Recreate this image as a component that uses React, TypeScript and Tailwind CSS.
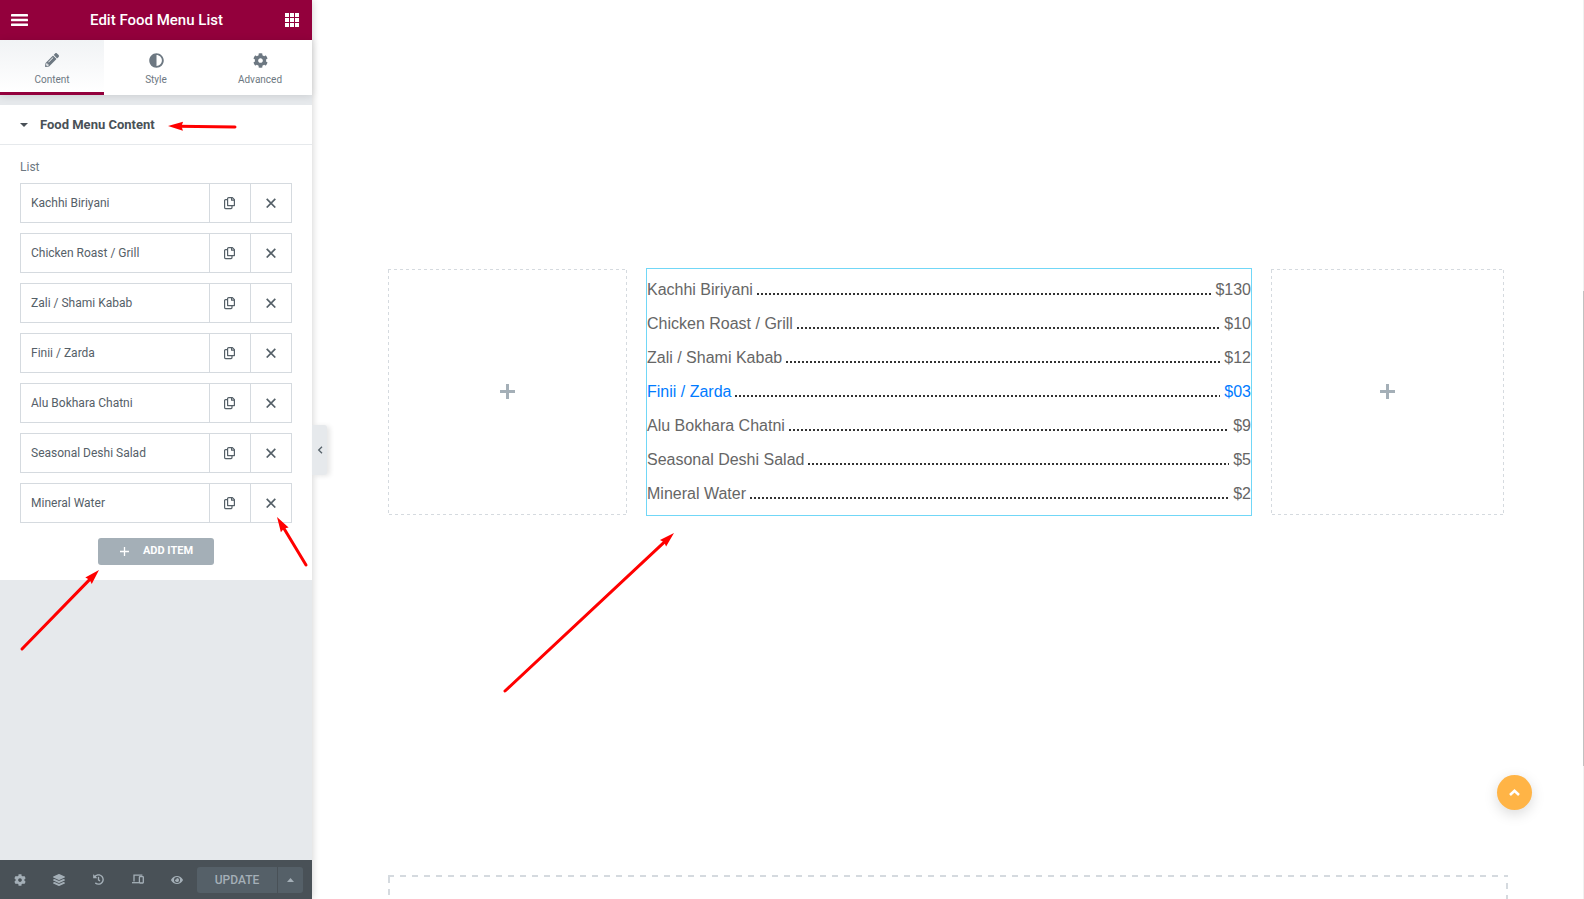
import { useState } from 'react';
import { FaAdjust, FaCog, FaEye, FaHistory, FaLayerGroup, FaPencilAlt } from 'react-icons/fa';

const menuItems = [
  { id: 1, name: 'Kachhi Biriyani', price: '$130' },
  { id: 2, name: 'Chicken Roast / Grill', price: '$10' },
  { id: 3, name: 'Zali / Shami Kabab', price: '$12' },
  { id: 4, name: 'Finii / Zarda', price: '$03', active: true },
  { id: 5, name: 'Alu Bokhara Chatni', price: '$9' },
  { id: 6, name: 'Seasonal Deshi Salad', price: '$5' },
  { id: 7, name: 'Mineral Water', price: '$2' }
];

const tabs = [
  { name: 'Content', icon: <PencilIcon /> },
  { name: 'Style', icon: <FaAdjust size={15} /> },
  { name: 'Advanced', icon: <FaCog size={15} /> }
];

// tail -> tip
const arrows = [
  { x1: 235, y1: 127, x2: 168, y2: 126 },
  { x1: 22, y1: 649, x2: 99, y2: 570 },
  { x1: 306, y1: 565, x2: 277, y2: 517 },
  { x1: 505, y1: 691, x2: 674, y2: 533 }
];

function PencilIcon() {
  return <FaPencilAlt size={14} />;
}

function MenuIcon() {
  return (
    <svg width="17" height="12" viewBox="0 0 17 12" fill="currentColor">
      {[0, 4.8, 9.6].map((y) => <rect key={y} y={y} width="17" height="2.4" rx=".4" />)}
    </svg>
  );
}

function GridIcon() {
  return (
    <svg width="14" height="14" viewBox="0 0 14 14" fill="currentColor">
      {[0, 5, 10].map((y) => [0, 5, 10].map((x) => <rect key={`${x}-${y}`} x={x} y={y} width="4" height="4" />))}
    </svg>
  );
}

function CopyIcon() {
  return (
    <svg width="12" height="14" viewBox="0 0 12 14" fill="none" stroke="currentColor" strokeWidth="1.2" strokeLinejoin="round">
      <path d="M4.600 1.600h3.800l2 2v6H3.600v-7a1 1 0 0 1 1-1z" />
      <path d="M7.600 1.600v2.600h2.800" />
      <path d="M3.600 3.600H1.600a1 1 0 0 0-1 1v7a1 1 0 0 0 1 1h5.400a1 1 0 0 0 1-1V9.600" />
    </svg>
  );
}

function CloseIcon() {
  return (
    <svg width="10" height="10" viewBox="0 0 10 10" fill="none" stroke="currentColor" strokeWidth="1.7">
      <path d="M.7.9l8.600 8.600M9.300.9L.7 9.500" />
    </svg>
  );
}

function PlusIcon({ size, stroke }: { size: number; stroke: number }) {
  return (
    <svg width={size} height={size} viewBox={`0 0 ${size} ${size}`} fill="none" stroke="currentColor" strokeWidth={stroke}>
      <path d={`M${size / 2} 0v${size}M0 ${size / 2}h${size}`} />
    </svg>
  );
}

function ResponsiveIcon() {
  return (
    <svg width="12" height="10" viewBox="0 0 12 10" fill="none" stroke="currentColor" strokeWidth="1.300">
      <path d="M2 7.500V1.100h8.400" />
      <path d="M0 8.700h7" />
      <rect x="7.400" y="2.600" width="3.900" height="6.400" rx=".5" />
    </svg>
  );
}

// border drawn inside the parent box, half of the stroke is clipped by the svg edge
function DashedFrame({ stroke, dash }: { stroke: number; dash: string }) {
  return (
    <svg className="absolute inset-0 size-full" fill="none" stroke="#d5dadf">
      <rect width="100%" height="100%" strokeWidth={stroke} strokeDasharray={dash} />
    </svg>
  );
}

function Arrows() {
  return (
    <svg className="pointer-events-none absolute left-0 top-0 z-20" width="700" height="720" viewBox="0 0 700 720">
      {arrows.map(({ x1, y1, x2, y2 }) => {
        const length = Math.hypot(x2 - x1, y2 - y1);
        const angle = (Math.atan2(y2 - y1, x2 - x1) * 180) / Math.PI;
        return (
          <g key={`${x1}-${y1}`} transform={`translate(${x2} ${y2}) rotate(${angle})`}>
            <line x1={-length} y1="0" x2="-10" y2="0" stroke="#ff0000" strokeWidth="3" strokeLinecap="round" />
            <path d="M0 0L-15-4.500L-13.500 0L-15 4.500Z" fill="#ff0000" />
          </g>
        );
      })}
    </svg>
  );
}

function Panel() {
  const [tab, setTab] = useState('Content');

  return (
    <aside className="relative z-10 flex w-[312px] shrink-0 flex-col bg-[#e6e9ec] font-[Roboto,sans-serif] text-[#556068] shadow-[0_0_8px_rgba(0,0,0,0.2)]">
      <header className="flex h-10 items-center justify-between bg-[#93003c] pl-[11px] pr-[13px] text-white">
        <button aria-label="Menu"><MenuIcon /></button>
        <h1 className="text-[15px] font-medium">Edit Food Menu List</h1>
        <button aria-label="Widgets"><GridIcon /></button>
      </header>

      <nav className="grid h-[55px] grid-cols-3 bg-white shadow-[0_1px_8px_rgba(0,0,0,0.12)]">
        {tabs.map(({ name, icon }) => (
          <button
            key={name}
            onClick={() => setTab(name)}
            className={`flex flex-col items-center gap-1 border-b-3 pt-3 text-[10px] leading-4 text-[#6d7882] ${
              tab === name ? 'border-[#93003c] bg-linear-to-b from-[#f1f3f5] to-white' : 'border-transparent'
            }`}
          >
            <span className="flex h-4 items-center">{icon}</span>
            {name}
          </button>
        ))}
      </nav>

      <section className="mt-[10px] bg-white">
        <h2 className="border-b border-[#e6e9ec]">
          <button className="flex h-[39px] w-full items-center gap-3 px-5 text-[13px] font-bold text-[#495157]">
            <svg width="8" height="4" viewBox="0 0 8 4" fill="currentColor">
              <path d="M0 0h8L4 4z" />
            </svg>
            Food Menu Content
          </button>
        </h2>
        <div className="flex flex-col px-5 pb-[15px] pt-[14px]">
          <span className="mb-2 text-xs text-[#6d7882]">List</span>
          <ul className="flex flex-col gap-[10px]">
            {menuItems.map((item) => (
              <li key={item.id} className="flex h-10 border border-[#d5dadf] text-xs">
                <button className="flex-1 px-[10px] text-left">{item.name}</button>
                <button aria-label={`Duplicate ${item.name}`} className="flex w-[41px] items-center justify-center border-l border-[#d5dadf]">
                  <CopyIcon />
                </button>
                <button aria-label={`Remove ${item.name}`} className="flex w-[41px] items-center justify-center border-l border-[#d5dadf]">
                  <CloseIcon />
                </button>
              </li>
            ))}
          </ul>
          <button className="mt-[15px] flex h-[27px] w-[116px] items-center justify-center gap-[14px] self-center rounded-[3px] bg-[#a4afb7] pl-px text-[11px] font-bold text-white">
            <PlusIcon size={9} stroke={1.3} />
            ADD ITEM
          </button>
        </div>
      </section>

      <footer className="mt-auto flex h-[39px] items-center bg-[#495157] pr-[9px] text-[#a4afb7]">
        <div className="grid flex-1 grid-cols-5">
          <button aria-label="Settings" className="flex justify-center"><FaCog size={12} /></button>
          <button aria-label="Navigator" className="flex justify-center"><FaLayerGroup size={12} /></button>
          <button aria-label="History" className="flex justify-center"><FaHistory size={11} /></button>
          <button aria-label="Responsive mode" className="flex justify-center"><ResponsiveIcon /></button>
          <button aria-label="Preview" className="flex justify-center"><FaEye size={12} /></button>
        </div>
        <div className="flex h-[26px] gap-px text-[#a4afb7]">
          <button className="w-20 rounded-l-[3px] bg-[#556068] text-xs font-medium">UPDATE</button>
          <button aria-label="Save options" className="flex w-[25px] items-center justify-center rounded-r-[3px] bg-[#556068]">
            <svg width="7" height="4" viewBox="0 0 7 4" fill="currentColor">
              <path d="M0 4h7L3.500 0z" />
            </svg>
          </button>
        </div>
      </footer>

      <button
        aria-label="Hide panel"
        className="absolute left-full top-[425px] flex h-[50px] w-[15px] items-center justify-center rounded-r-[3px] bg-[#e6e9ec] pl-px shadow-[3px_1px_5px_rgba(0,0,0,0.1)]"
      >
        <svg width="6" height="8" viewBox="0 0 6 8" fill="none" stroke="currentColor" strokeWidth="1.300">
          <path d="M5 .8L1.700 4L5 7.200" />
        </svg>
      </button>
    </aside>
  );
}

function EmptyColumn() {
  return (
    <button aria-label="Add widget" className="relative my-px flex items-center justify-center pb-[2px] text-[#a4afb7]">
      <DashedFrame stroke={2} dash="3 3" />
      <PlusIcon size={15} stroke={3} />
    </button>
  );
}

function Preview() {
  return (
    <main className="relative flex min-w-0 flex-1 flex-col justify-between overflow-hidden bg-white pl-[76px] pr-[76px] pt-[268px] font-['Liberation_Sans',Arial,sans-serif]">
      <div className="mr-1 grid grid-cols-[239fr_606fr_233fr] gap-[19px]">
        <EmptyColumn />
        <ul className="border border-[#71d7f7] py-1 text-base text-[#666666]">
          {menuItems.map((item) => (
            <li key={item.id} className={`flex h-[34px] items-center gap-1 ${item.active ? 'text-[#007bff]' : ''}`}>
              <span>{item.name}</span>
              <span className="mt-2 h-[2px] flex-1 bg-[repeating-linear-gradient(to_right,#333_0_2px,transparent_2px_4px)]" />
              <span>{item.price}</span>
            </li>
          ))}
        </ul>
        <EmptyColumn />
      </div>
      <div className="relative h-6 overflow-hidden">
        <div className="absolute inset-x-0 top-0 h-12">
          <DashedFrame stroke={4} dash="6 6" />
        </div>
      </div>
      <button
        aria-label="Back to top"
        className="absolute bottom-[89px] right-[52px] flex size-[35px] items-center justify-center rounded-full bg-[#ffb446] text-white shadow-[0_4px_14px_rgba(0,0,0,0.15)]"
      >
        <svg width="11" height="7" viewBox="0 0 11 7" fill="none" stroke="currentColor" strokeWidth="2.600">
          <path d="M1 6l4.500-4.200L10 6" />
        </svg>
      </button>
      {/* scroll thumb */}
      <div className="absolute inset-y-0 right-0 w-px bg-[#f1f1f1]">
        <div className="mt-[291px] h-[475px] bg-[#c1c1c1]" />
      </div>
    </main>
  );
}

export default function App() {
  return (
    <div className="relative flex min-h-screen bg-white">
      <Panel />
      <Preview />
      <Arrows />
    </div>
  );
}
